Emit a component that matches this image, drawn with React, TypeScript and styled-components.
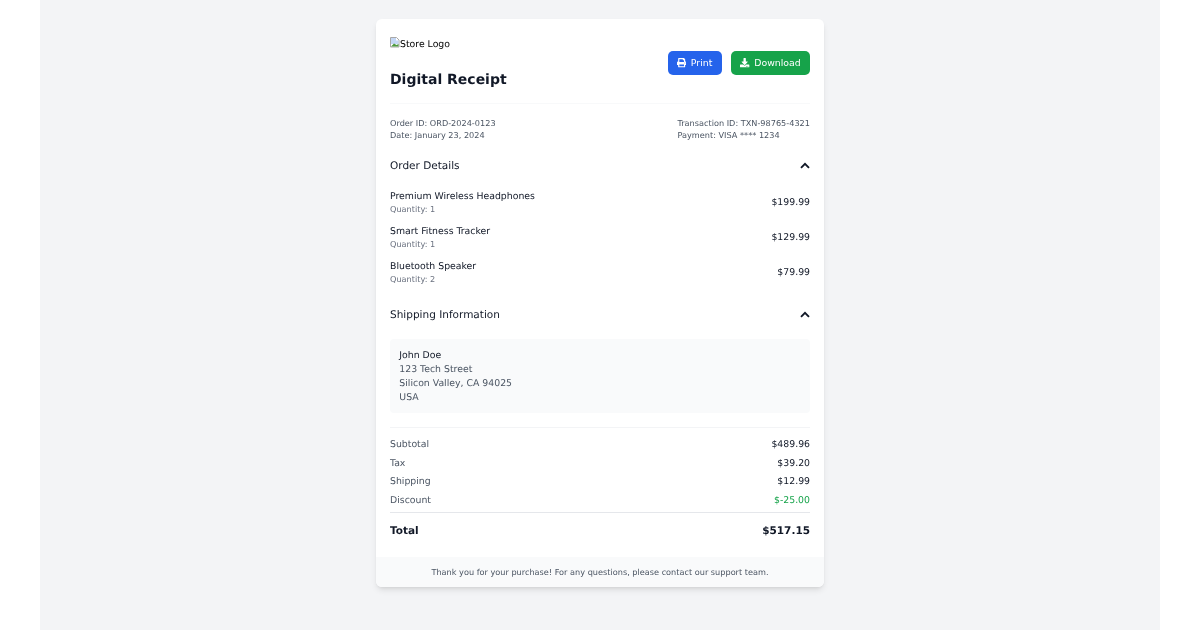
import React from 'react'
import styled, { createGlobalStyle } from 'styled-components'
import { FaPrint, FaDownload } from 'react-icons/fa'

const GlobalStyle = createGlobalStyle`
  html, body {
    margin: 0;
    padding: 0;
    background: #ffffff;
    font-family: "DejaVu Sans", sans-serif;
    text-rendering: geometricPrecision;
  }
`

const Page = styled.div`
  width: 1120px;
  height: 630px;
  margin: 0 auto;
  padding-top: 19px;
  box-sizing: border-box;
  background: #f3f4f6;
  overflow: hidden;
`

const Card = styled.div`
  width: 448px;
  margin: 0 auto;
  background: #ffffff;
  border-radius: 6px;
  overflow: hidden;
  will-change: transform;
  box-shadow: 0 4px 6px -1px rgba(0, 0, 0, 0.1), 0 2px 4px -2px rgba(0, 0, 0, 0.1);
`

const Body = styled.div`
  padding: 14px 14px 0;
`

const Header = styled.div`
  display: flex;
  justify-content: space-between;
  align-items: center;
  padding-bottom: 12px;
  border-bottom: 1px solid #f8f9fa;
`

const Logo = styled.div`
  display: flex;
  align-items: center;
  height: 22px;
  margin-bottom: 15px;
  font-size: 9.33px;
  color: #000000;
`

const Title = styled.h1`
  margin: 0;
  font-size: 14px;
  line-height: 21px;
  font-weight: 700;
  color: #111827;
`

const Actions = styled.div`
  display: flex;
  gap: 9.33px;
  margin-top: 2px;
`

const ActionButton = styled.button<{ $tone: string }>`
  display: flex;
  align-items: center;
  gap: 4.67px;
  height: 24px;
  padding: 0 9.33px 2px;
  border: none;
  border-radius: 5px;
  font-family: inherit;
  font-size: 9.33px;
  color: #ffffff;
  background: ${(p) => p.$tone};

  & svg {
    margin-top: 2px;
  }
`

const Meta = styled.div`
  display: flex;
  justify-content: space-between;
  margin-top: 13px;
  font-size: 8.17px;
  line-height: 12.25px;
  color: #4b5563;
`

const MetaRight = styled.div`
  text-align: left;
`

const SectionHead = styled.div<{ $gap: number }>`
  display: flex;
  justify-content: space-between;
  align-items: center;
  height: 20px;
  margin-top: ${(p) => p.$gap}px;
  font-size: 10.5px;
  color: #111827;
`

const Items = styled.div`
  display: flex;
  flex-direction: column;
  gap: 9px;
  margin-top: 14px;
`

const Item = styled.div`
  display: flex;
  justify-content: space-between;
  align-items: center;
`

const ItemName = styled.div`
  font-size: 9.33px;
  line-height: 14px;
  color: #111827;
`

const ItemQty = styled.div`
  padding-bottom: 1.5px;
  font-size: 8.17px;
  line-height: 10.5px;
  color: #6b7280;
`

const ItemPrice = styled.div`
  font-size: 9.33px;
  color: #111827;
`

const Address = styled.div`
  margin-top: 14px;
  padding: 10px 9.33px 8.67px;
  background: #f9fafb;
  border-radius: 4px;
  font-size: 9.33px;
  line-height: 14px;
  color: #4b5563;
`

const AddressName = styled.div`
  color: #111827;
`

const Totals = styled.div`
  margin-top: 14px;
  padding-top: 7px;
  border-top: 1px solid #f3f4f6;
`

const TotalRow = styled.div`
  display: flex;
  justify-content: space-between;
  height: 18.67px;
  align-items: center;
  font-size: 9.33px;
  color: #4b5563;
`

const Amount = styled.span<{ $green?: boolean }>`
  color: ${(p) => (p.$green ? '#16a34a' : '#111827')};
`

const GrandTotal = styled.div`
  display: flex;
  justify-content: space-between;
  align-items: center;
  margin-top: 2.5px;
  padding: 7.5px 0 15.5px;
  border-top: 1px solid #e5e7eb;
  font-size: 10.5px;
  line-height: 21px;
  font-weight: 700;
  color: #111827;
`

const Footer = styled.div`
  padding: 7px 14px;
  background: #f9fafb;
  text-align: center;
  font-size: 8.17px;
  line-height: 16px;
  color: #4b5563;
`

const ChevronIcon = styled.svg`
  width: 10px;
  height: 10px;
  margin-right: 0.5px;
`

const BrokenImage = () => (
  <svg width="10" height="14" viewBox="0 0 10 14">
    <path d="M0.5 0.5h6l2.5 2.5v7h-8.5z" fill="#ffffff" stroke="#a8a8a8" />
    <path d="M1 1h5v2.5h2.5V7H1z" fill="#c4d7f5" />
    <path d="M1 9.5l3-3 2.5 1.5 2-1v2.5z" fill="#4f9a3f" />
  </svg>
)

const orderItems = [
  { name: 'Premium Wireless Headphones', qty: 1, price: '$199.99' },
  { name: 'Smart Fitness Tracker', qty: 1, price: '$129.99' },
  { name: 'Bluetooth Speaker', qty: 2, price: '$79.99' },
]

const totals = [
  { label: 'Subtotal', value: '$489.96' },
  { label: 'Tax', value: '$39.20' },
  { label: 'Shipping', value: '$12.99' },
  { label: 'Discount', value: '$-25.00', green: true },
]

const Chevron = () => (
  <ChevronIcon viewBox="0 0 10 10" fill="none" stroke="#111827" strokeWidth="1.9">
    <path d="M1 6.8l4-4 4 4" />
  </ChevronIcon>
)

const App: React.FC = () => {
  return (
    <>
      <GlobalStyle />
      <Page>
        <Card>
          <Body>
            <Header>
              <div>
                <Logo>
                  <BrokenImage />
                  Store Logo
                </Logo>
                <Title>Digital Receipt</Title>
              </div>
              <Actions>
                <ActionButton $tone="#2563eb">
                  <FaPrint size={9.33} />
                  Print
                </ActionButton>
                <ActionButton $tone="#16a34a">
                  <FaDownload size={9.33} />
                  Download
                </ActionButton>
              </Actions>
            </Header>
            <Meta>
              <div>
                <div>Order ID: ORD-2024-0123</div>
                <div>Date: January 23, 2024</div>
              </div>
              <MetaRight>
                <div>Transaction ID: TXN-98765-4321</div>
                <div>Payment: VISA **** 1234</div>
              </MetaRight>
            </Meta>
            <SectionHead $gap={14}>
              Order Details
              <Chevron />
            </SectionHead>
            <Items>
              {orderItems.map((item) => (
                <Item key={item.name}>
                  <div>
                    <ItemName>{item.name}</ItemName>
                    <ItemQty>Quantity: {item.qty}</ItemQty>
                  </div>
                  <ItemPrice>{item.price}</ItemPrice>
                </Item>
              ))}
            </Items>
            <SectionHead $gap={19}>
              Shipping Information
              <Chevron />
            </SectionHead>
            <Address>
              <AddressName>John Doe</AddressName>
              <div>123 Tech Street</div>
              <div>Silicon Valley, CA 94025</div>
              <div>USA</div>
            </Address>
            <Totals>
              {totals.map((row) => (
                <TotalRow key={row.label}>
                  {row.label}
                  <Amount $green={row.green}>{row.value}</Amount>
                </TotalRow>
              ))}
              <GrandTotal>
                <span>Total</span>
                <span>$517.15</span>
              </GrandTotal>
            </Totals>
          </Body>
          <Footer>Thank you for your purchase! For any questions, please contact our support team.</Footer>
        </Card>
      </Page>
    </>
  )
}

export default App
